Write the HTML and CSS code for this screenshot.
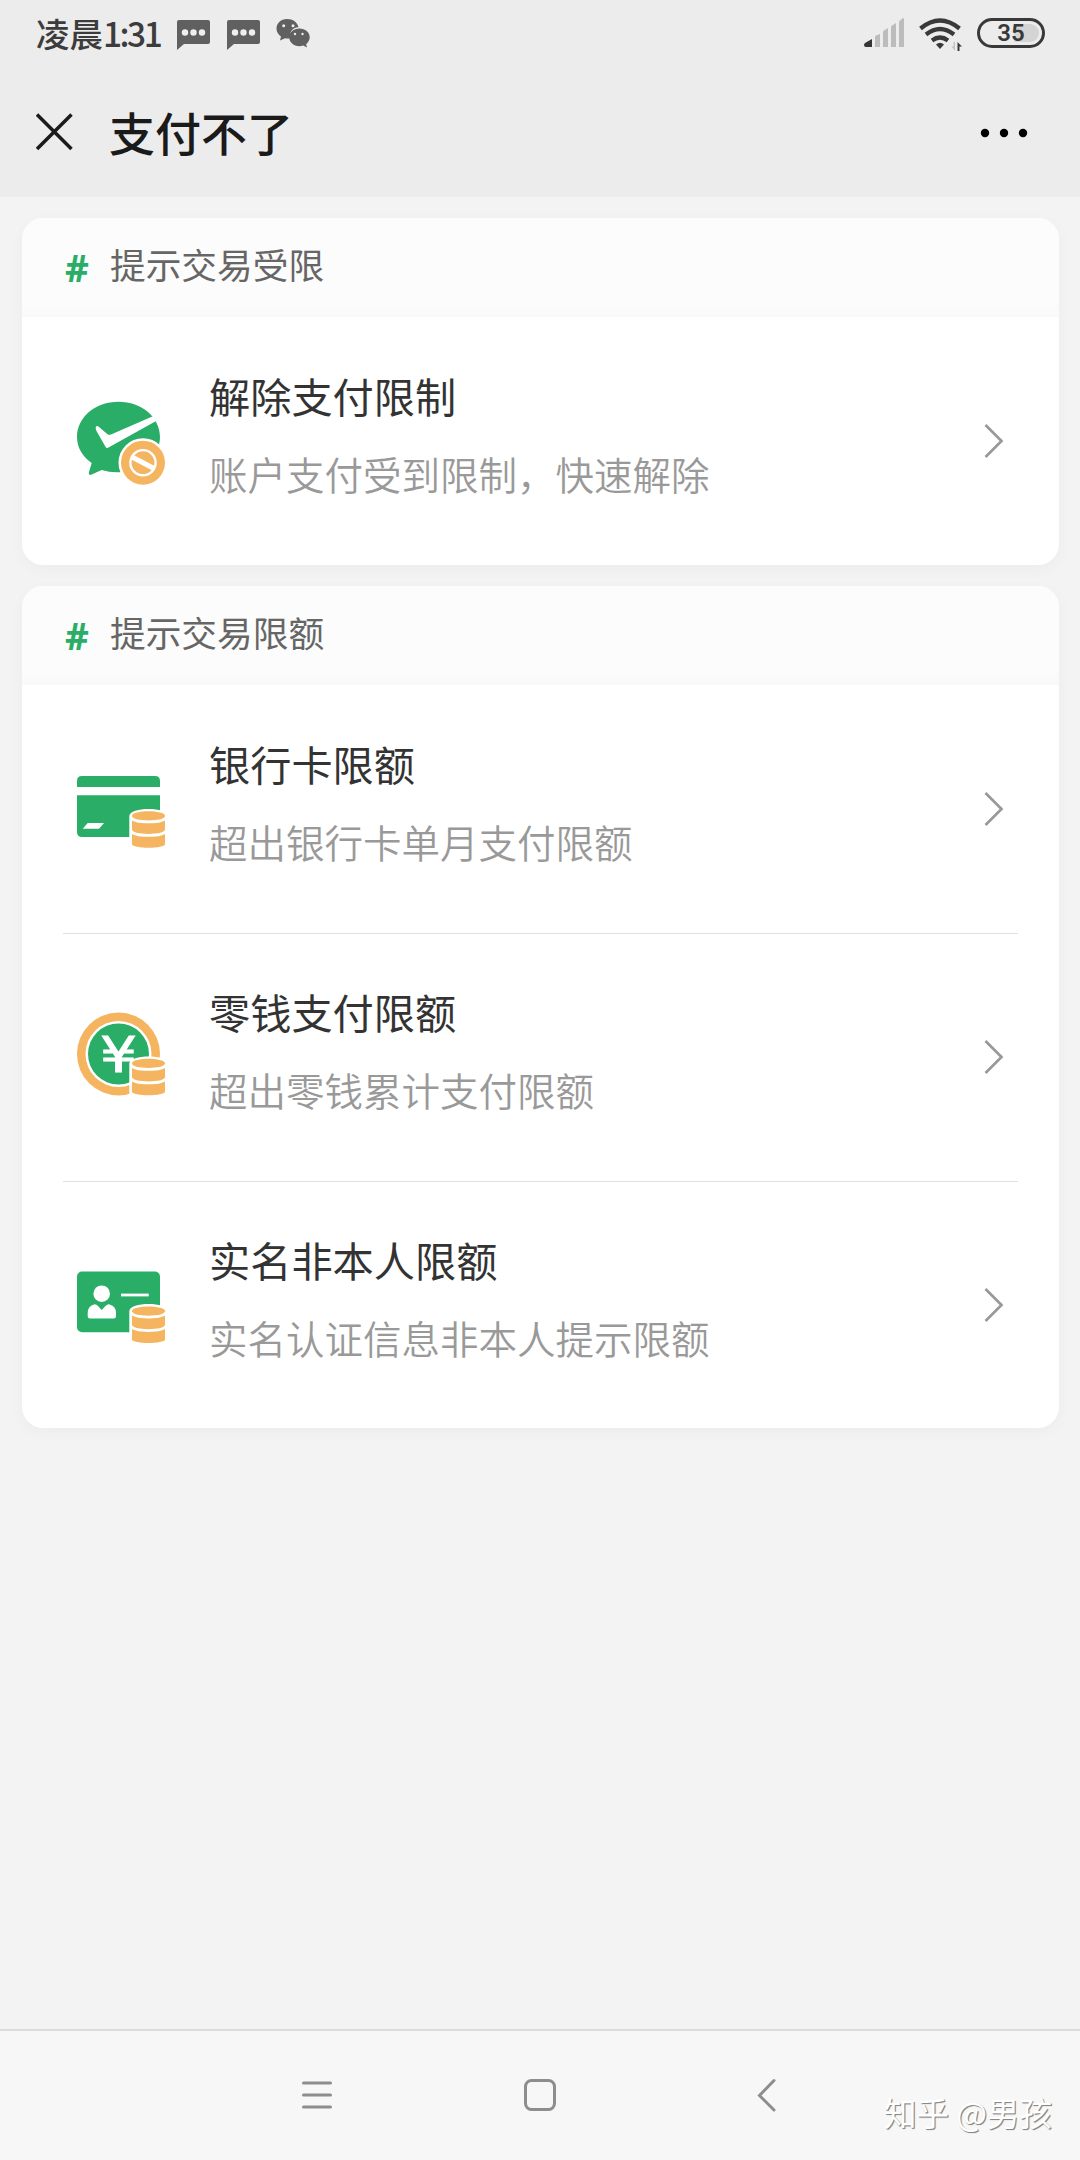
FILE: index.html
```html
<!DOCTYPE html>
<html lang="zh-CN">
<head>
<meta charset="utf-8">
<title>支付不了</title>
<link rel="stylesheet" href="styles.css">
</head>
<body>
<svg class="defs" width="0" height="0" aria-hidden="true">
  <defs>
    <g id="coins">
      <path d="M57.3 88V55C57.3 45.5 96 45.5 96 55V88Z" fill="#fff"/>
      <path d="M60 55C60 48.8 93 48.8 93 55V83C93 88 60 88 60 83Z" fill="#f5b560"/>
      <path d="M59 56.5C62 62.3 91 62.3 94 56.5M59 70C62 75.800 91 75.800 94 70" fill="none" stroke="#fff" stroke-width="2.800"/>
    </g>
    <g id="message">
      <path d="M2 0H31Q33 0 33 2V22Q33 24 31 24H7L0 30V2Q0 0 2 0Z" fill="#606060"/>
      <g fill="#eee"><circle cx="8" cy="12.500" r="3.200"/><circle cx="16.500" cy="12.500" r="3.200"/><circle cx="25" cy="12.500" r="3.200"/></g>
    </g>
  </defs>
</svg>
<div class="screen">
  <header class="top">
    <div class="status">
      <span class="time">凌晨<span class="digits">1:31</span></span>
      <svg class="msg" width="33" height="30"><use href="#message"/></svg>
      <svg class="msg second" width="33" height="30"><use href="#message"/></svg>
      <svg class="wechat" width="34" height="30" viewBox="0 0 34 30">
        <path d="M11 1C5 1 .5 5.200.500 10.500c0 3.500 1.800 6 4.500 8L4 22.500l5-2.300q2 .5 5 .1C13 13 18 9 22.500 9.300 21.500 4.500 17 1 11 1Z" fill="#606060"/>
        <path d="M23.300 10.500c-5.600 0-10.100 3.800-10.100 8.800s4.500 8.900 10.100 8.900q2 0 3.800-.6l4 1.800-1-3.200c2.200-1.700 3.600-4.200 3.600-6.900 0-5-4.500-8.800-10.400-8.800Z" fill="#606060"/>
        <g fill="#eee"><circle cx="7.700" cy="7.800" r="1.500"/><circle cx="17" cy="7.800" r="1.500"/><circle cx="19" cy="16" r="1.200"/><circle cx="26.500" cy="16" r="1.200"/></g>
      </svg>
      <span class="spacer"></span>
      <svg class="signal" width="40" height="29" viewBox="0 0 40 29">
        <path d="M0 27Q0 26 1 25L8 21V29H2Q0 29 0 27Z" fill="#353535"/>
        <path d="M11 19Q11 18 12 17.500L16 16V29H11ZM19 14Q19 13 20 12.500L24 10V29H19ZM27 9Q27 8 28 7.500L32 5V29H27ZM35 4Q35 3 36 2.500L39 0Q40 0 40 1V29H35Z" fill="#bcbcbc"/>
      </svg>
      <svg class="wifi" width="44" height="34" viewBox="0 0 44 34">
        <g fill="none" stroke="#393939" stroke-width="4.300">
          <path d="M1.500 10.500Q21 -5.500 40.500 10.500"/><path d="M7 16.500Q21 5.500 35 16.500"/><path d="M13 22.500Q21 16.500 29 22.500"/>
        </g>
        <path d="M17 26.500Q21 23 25 26.500L21 31Z" fill="#393939"/>
        <path d="M36 24V33L32.500 28.500H34.500V24Z" fill="#c4c4c4"/><path d="M38.500 33V24L43 28.500H40.500V33Z" fill="#393939"/>
      </svg>
      <div class="battery"><span>35</span></div>
    </div>
    <div class="titlebar">
      <svg width="38" height="38" viewBox="0 0 38 38"><path d="M1 1.500L35.500 36M35.500 1.500L1 36" stroke="#1b1b1b" stroke-width="3.500"/></svg>
      <h1>支付不了</h1>
      <svg class="more" width="48" height="10" viewBox="0 0 48 10"><circle cx="5" cy="5" r="4.200"/><circle cx="24" cy="5" r="4.200"/><circle cx="43" cy="5" r="4.200"/></svg>
    </div>
  </header>

  <main>
    <section class="card">
      <h2><span class="hash">#</span>提示交易受限</h2>
      <div class="row">
        <svg class="icon" viewBox="0 0 100 96">
          <path d="M46.500 8.800C23 8.800 5 24.500 5 44C5 54.500 10.500 63.500 19.700 70L16.800 79.800Q16.500 82.500 19 81.800L29.700 77Q38 79.500 46.500 79.200C70 79.200 88 63.500 88 44S70 8.800 46.500 8.800Z" fill="#2aae67"/>
          <path d="M23.700 34.500Q24 32 26.500 33.500L35.500 41.300Q37 42.300 39 41.500L82 22.800L85 27.600L36.500 54.500Q34.500 55.800 33.500 53.700L24.500 38Q23.500 36 23.700 34.500Z" fill="#fff"/>
          <circle cx="71" cy="69.700" r="24.500" fill="#fff"/><circle cx="71" cy="69.700" r="22" fill="#f5b560"/>
          <circle cx="71" cy="69.700" r="12.600" fill="none" stroke="#fff" stroke-width="2.400"/>
          <path d="M60.500 64.300L81.500 75.200" stroke="#fff" stroke-width="5"/>
        </svg>
        <div class="text"><h3>解除支付限制</h3><p>账户支付受到限制，快速解除</p></div>
        <svg class="arrow" viewBox="0 0 20 34"><path d="M1.500 1L17.500 17L1.500 33"/></svg>
      </div>
    </section>

    <section class="card">
      <h2><span class="hash">#</span>提示交易限额</h2>
      <div class="row">
        <svg class="icon" viewBox="0 0 100 96">
          <path d="M5 26V20Q5 15 10 15H83Q88 15 88 20V26ZM5 34.300H88V76H10Q5 76 5 71Z" fill="#2aae67"/>
          <path d="M15.700 62H32L27 67.700H10.700Z" fill="#fff"/>
          <use href="#coins"/>
        </svg>
        <div class="text"><h3>银行卡限额</h3><p>超出银行卡单月支付限额</p></div>
        <svg class="arrow" viewBox="0 0 20 34"><path d="M1.500 1L17.500 17L1.500 33"/></svg>
      </div>
      <div class="row">
        <svg class="icon" viewBox="0 0 100 96">
          <circle cx="46.500" cy="45" r="41.500" fill="#f5b560"/><circle cx="46.500" cy="45" r="33" fill="#fff"/><circle cx="46.500" cy="45" r="30.500" fill="#2aae67"/>
          <text class="yen" x="46.500" y="62.500" text-anchor="middle" textLength="37" lengthAdjust="spacingAndGlyphs">¥</text>
          <use href="#coins" y="-0.500"/>
        </svg>
        <div class="text"><h3>零钱支付限额</h3><p>超出零钱累计支付限额</p></div>
        <svg class="arrow" viewBox="0 0 20 34"><path d="M1.500 1L17.500 17L1.500 33"/></svg>
      </div>
      <div class="row">
        <svg class="icon" viewBox="0 0 100 96">
          <rect x="5" y="14.500" width="83" height="60.800" rx="5" fill="#2aae67"/>
          <circle cx="29.700" cy="36.700" r="8.300" fill="#fff"/>
          <path d="M22.500 47.300Q24.500 47.300 26 49L29.700 53L33.500 49Q35 47.300 37 47.300Q44 49 44 56V59Q44 61.500 41.500 61.500H18.200Q15.700 61.500 15.700 59V56Q15.700 49 22.500 47.300Z" fill="#fff"/>
          <path d="M49 38H76.700" stroke="#fff" stroke-width="2.800"/>
          <use href="#coins" y="-0.800"/>
        </svg>
        <div class="text"><h3>实名非本人限额</h3><p>实名认证信息非本人提示限额</p></div>
        <svg class="arrow" viewBox="0 0 20 34"><path d="M1.500 1L17.500 17L1.500 33"/></svg>
      </div>
    </section>
  </main>

  <nav class="nav">
    <svg width="32" height="34" viewBox="0 0 32 34"><path d="M2.500 5H29.500M2.500 17H29.500M2.500 29H29.500"/></svg>
    <svg width="32" height="34" viewBox="0 0 32 34"><rect x="1.500" y="2.500" width="29" height="29" rx="6"/></svg>
    <svg width="20" height="34" viewBox="0 0 20 34"><path d="M17 2.500L2.500 17.500L17 32"/></svg>
    <span class="watermark">知乎 @男孩</span>
  </nav>
</div>
</body>
</html>
```
FILE: styles.css
```css
* { box-sizing: border-box; }

body {
  margin: 0;
  background: #f3f3f3;
  font-family: "Noto Sans CJK SC", sans-serif;
}

h1, h2, h3, p { margin: 0; font-weight: 400; }
svg { display: block; flex: none; }
.defs { position: absolute; }

.screen {
  display: flex;
  flex-direction: column;
  width: 1080px;
  height: 2160px;
  overflow: hidden;
}

.top { height: 197px; background: #ececec; }

.status {
  display: flex;
  align-items: flex-start;
  height: 66px;
  padding: 18px 35px 0 36px;
}
.time {
  width: 141px;
  margin-top: -2px;
  font-size: 33.500px;
  font-weight: 500;
  line-height: 34px;
  color: #3c3c3c;
  white-space: nowrap;
}
.digits { letter-spacing: -2.500px; }
.msg { margin-top: 2px; }
.msg.second { margin-left: 17px; }
.wechat { margin-left: 16px; }
.spacer { flex: 1; }
.signal { margin-right: 15px; }
.wifi { margin-right: 14px; }
.battery {
  width: 68px;
  height: 30px;
  padding: 3px;
  border: 3px solid #393939;
  border-radius: 15px;
}
.battery span {
  display: block;
  height: 18px;
  border-radius: 9px;
  background: linear-gradient(90deg, transparent 55%, #d4d4d4 55%);
  font-family: Roboto, sans-serif;
  font-size: 24px;
  font-weight: 600;
  line-height: 19px;
  text-align: center;
  color: #393939;
}

.titlebar {
  display: flex;
  align-items: center;
  height: 131px;
  padding: 0 52px 0 36px;
}
.titlebar h1 {
  flex: 1;
  margin: 0 0 2px 35px;
  font-size: 46px;
  font-weight: 500;
  line-height: 60px;
  color: #1a1a1a;
}
.more { margin-top: 2px; }

main {
  display: flex;
  flex: 1;
  flex-direction: column;
  gap: 21px;
  padding: 21px 21px 0 22px;
}
.card {
  border-radius: 21px;
  background: #fff;
  box-shadow: 0 4px 16px rgba(0, 0, 0, .03);
}
.card h2 {
  display: flex;
  align-items: center;
  height: 99px;
  padding: 0 0 8px 43px;
  border-radius: 21px 21px 0 0;
  background: linear-gradient(#fcfcfc 85%, #f9f9f9);
  font-size: 35.700px;
  color: #666;
}
.hash {
  width: 45px;
  padding-top: 8px;
  font-family: "Noto Sans", sans-serif;
  font-size: 37px;
  font-weight: 700;
  color: #2aae67;
}
.row {
  position: relative;
  display: flex;
  align-items: center;
  height: 248px;
  padding: 0 55px 0 50px;
}
.row + .row:last-child { height: 247px; }
.row + .row::before {
  content: "";
  position: absolute;
  top: 0;
  left: 41px;
  right: 41px;
  height: 1px;
  background: #e0e0e0;
}
.icon { width: 100px; height: 96px; }
.yen {
  font-family: "DejaVu Sans", sans-serif;
  font-size: 49px;
  fill: #fff;
  stroke: #fff;
  stroke-width: 1;
}
.text { flex: 1; margin-left: 37px; padding-bottom: 14px; }
.text h3 { font-size: 41.200px; line-height: 64px; color: #333; }
.text p { margin-top: 14px; font-size: 38.500px; line-height: 64px; color: #999; font-weight: 350; }
.arrow { width: 20px; height: 34px; fill: none; stroke: #999; stroke-width: 2.700; }

.nav {
  position: relative;
  display: flex;
  align-items: center;
  height: 131px;
  padding: 0 0 2px 301px;
  border-top: 2px solid #dcdcdc;
  background: #f7f7f7;
}
.nav svg {
  fill: none;
  stroke: #8d8d8d;
  stroke-width: 3;
  stroke-linecap: round;
}
.nav svg + svg { margin-left: 191px; }
.nav svg:nth-child(3) { margin-left: 201px; }
.watermark {
  position: absolute;
  right: 28px;
  bottom: 25px;
  font-size: 32.500px;
  line-height: 46px;
  color: #fff;
  text-shadow: 1px 1px 1px #888, 1px 1px 0 #999;
  white-space: nowrap;
}
```
